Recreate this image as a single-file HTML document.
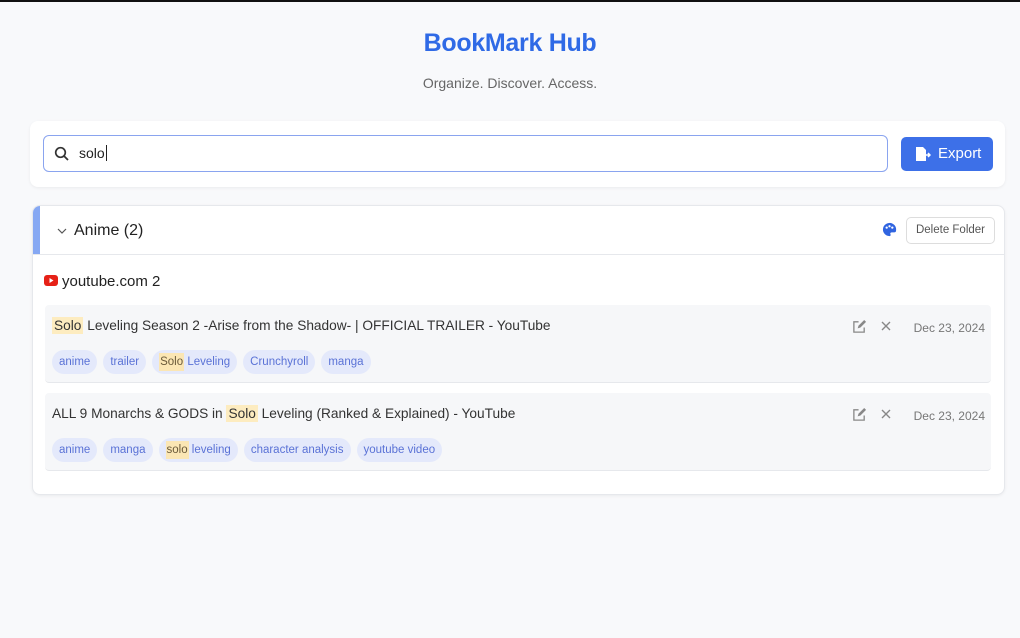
<!DOCTYPE html>
<html><head><meta charset="utf-8"><style>
*{box-sizing:border-box;margin:0;padding:0}
body{width:1020px;height:638px;background:#f8f9fb;font-family:"Liberation Sans",sans-serif;position:relative;overflow:hidden}
.abs{position:absolute}
h1{position:absolute;top:29px;left:0;width:1020px;text-align:center;color:#2f6ae6;font-size:25px;font-weight:bold;letter-spacing:-0.3px}
.sub{position:absolute;top:75px;width:1020px;text-align:center;color:#666;font-size:14px}
.card{position:absolute;background:#fff;border-radius:8px;box-shadow:0 1px 3px rgba(0,0,0,.06)}
.input{position:absolute;left:43px;top:135px;width:845px;height:37px;border:1.5px solid #8aa4ef;border-radius:6px;background:#fff}
.btn{position:absolute;left:901px;top:137px;width:92px;height:34px;background:#3d70e8;border-radius:5px;color:#fff;font-size:15px}
.item{position:absolute;left:45px;width:946px;height:78px;background:#f6f7f9;border-radius:4px;border-bottom:1px solid #e6e8ec}
.t{position:absolute;left:7px;top:13px;font-size:13.7px;color:#333;white-space:nowrap}
.hl{background:#fdecc0;padding:1px 2px}
.tags{position:absolute;left:7px;top:45px;display:flex;gap:6px}
.tag{background:#e4e9fb;color:#5a72d6;font-size:11.5px;height:24px;line-height:24px;padding:0 7px;border-radius:12px}
.tag .hl{background:#fbe6b4;color:#6a5a3a;padding:3px 1px}
.date{position:absolute;right:6px;top:16px;font-size:12px;color:#777}
.ic{position:absolute;top:14px}
</style></head><body>
<div class="abs" style="left:0;top:0;width:1020px;height:2px;background:#111"></div>
<h1>BookMark Hub</h1>
<div class="sub">Organize. Discover. Access.</div>
<div class="card" style="left:30px;top:121px;width:975px;height:66px"></div>
<div class="input"><svg class="abs" style="left:10px;top:10px" width="16" height="16" viewBox="0 0 16 16"><circle cx="6.5" cy="6.5" r="4.8" fill="none" stroke="#333" stroke-width="1.7"/><path d="M10 10l4 4" stroke="#333" stroke-width="1.8"/></svg><span class="abs" style="left:35px;top:9px;font-size:14px;color:#222">solo<span style="border-left:1px solid #222;margin-left:1px"></span></span></div>
<div class="btn"><svg class="abs" style="left:14px;top:9px" width="16" height="16" viewBox="0 0 16 16"><path d="M1 1h7l3 3v11H1z" fill="#fff"/><path d="M9 9h6m-2-2l2 2-2 2" stroke="#fff" stroke-width="1.5" fill="none"/></svg><span class="abs" style="left:37px;top:8px">Export</span></div>

<div class="card" style="left:32px;top:205px;width:973px;height:290px;border:1px solid #e6e8ec;overflow:hidden">
<div class="abs" style="left:0;top:0;width:7px;height:49px;background:#86a8f3"></div>
<div class="abs" style="left:0;top:48px;width:973px;border-top:1px solid #e6e8ec"></div>
<svg class="abs" style="left:24px;top:21px" width="10" height="8" viewBox="0 0 10 8"><path d="M1 2l4 4 4-4" stroke="#555" stroke-width="1.2" fill="none"/></svg>
<span class="abs" style="left:41px;top:16px;font-size:16px;color:#222">Anime (2)</span>
<svg class="abs" style="left:849px;top:16px" width="15" height="15" viewBox="0 0 16 16"><path d="M8 1a7 7 0 100 14c1.2 0 1.5-1 1-2s0-2 1.5-2H13a2 2 0 002-2A7 7 0 008 1z" fill="#3064e0"/><circle cx="5" cy="6" r="1.2" fill="#fff"/><circle cx="8" cy="4.5" r="1.2" fill="#fff"/><circle cx="11" cy="6" r="1.2" fill="#fff"/></svg>
<div class="abs" style="left:873px;top:11px;width:89px;height:27px;border:1px solid #ddd;border-radius:5px;font-size:11.5px;color:#555;text-align:center;line-height:25px">Delete Folder</div>
<svg class="abs" style="left:11px;top:69px" width="14" height="11" viewBox="0 0 14 11"><rect width="14" height="11" rx="3" fill="#e62117"/><path d="M5.5 3v5l4-2.5z" fill="#fff"/></svg>
<span class="abs" style="left:29px;top:67px;font-size:15px;color:#222">youtube.com 2</span>
</div>

<div class="item" style="top:305px">
<div class="t"><span class="hl">Solo</span> Leveling Season 2 -Arise from the Shadow- | OFFICIAL TRAILER - YouTube</div>
<div class="tags"><span class="tag">anime</span><span class="tag">trailer</span><span class="tag"><span class="hl">Solo</span> Leveling</span><span class="tag">Crunchyroll</span><span class="tag">manga</span></div>
<svg class="ic" style="left:807px" width="15" height="15" viewBox="0 0 16 16"><path d="M13 9v5H2V3h5" stroke="#888" stroke-width="1.4" fill="none"/><path d="M6 10l1-3 6-6 2 2-6 6z" fill="#888"/></svg>
<svg class="ic" style="left:836px;top:16px" width="10" height="10" viewBox="0 0 10 10"><path d="M1 1l8 8M9 1l-8 8" stroke="#888" stroke-width="1.4"/></svg>
<div class="date">Dec 23, 2024</div>
</div>
<div class="item" style="top:393px">
<div class="t">ALL 9 Monarchs &amp; GODS in <span class="hl">Solo</span> Leveling (Ranked &amp; Explained) - YouTube</div>
<div class="tags"><span class="tag">anime</span><span class="tag">manga</span><span class="tag"><span class="hl">solo</span> leveling</span><span class="tag">character analysis</span><span class="tag">youtube video</span></div>
<svg class="ic" style="left:807px" width="15" height="15" viewBox="0 0 16 16"><path d="M13 9v5H2V3h5" stroke="#888" stroke-width="1.4" fill="none"/><path d="M6 10l1-3 6-6 2 2-6 6z" fill="#888"/></svg>
<svg class="ic" style="left:836px;top:16px" width="10" height="10" viewBox="0 0 10 10"><path d="M1 1l8 8M9 1l-8 8" stroke="#888" stroke-width="1.4"/></svg>
<div class="date">Dec 23, 2024</div>
</div>
</body></html>
